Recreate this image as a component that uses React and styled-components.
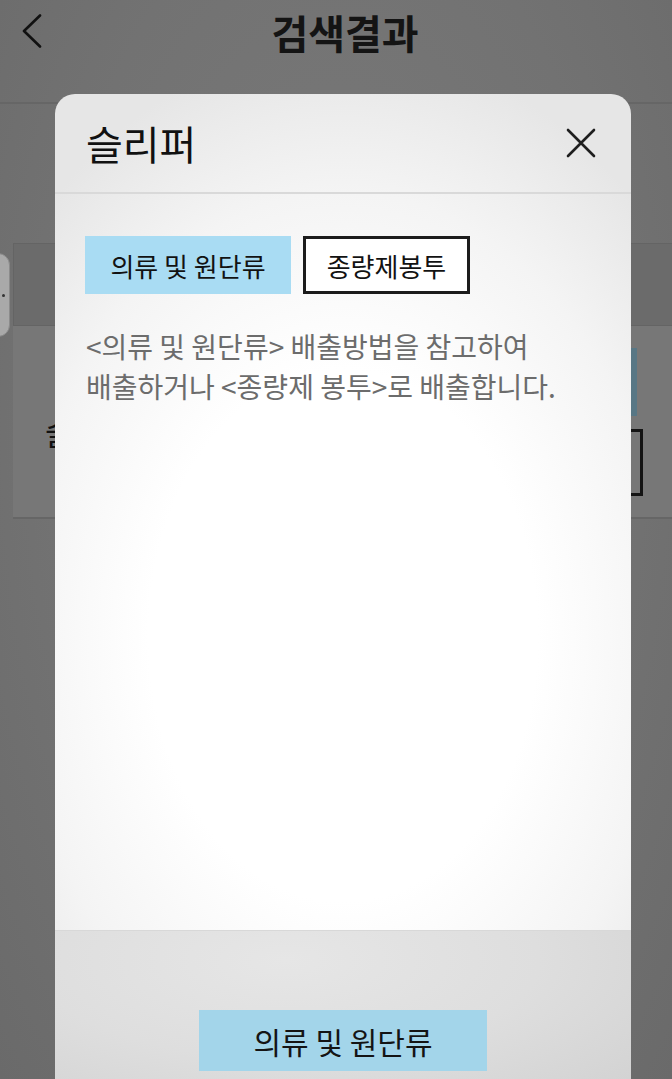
import React from "react";
import styled, { createGlobalStyle } from "styled-components";

const GlobalStyle = createGlobalStyle`
  html, body {
    margin: 0;
    padding: 0;
  }
  body {
    background: #717171;
    font-family: "Noto Sans CJK KR", "Noto Sans", sans-serif;
  }
`;

const Screen = styled.div`
  position: relative;
  width: 672px;
  height: 1079px;
  overflow: hidden;
  background: radial-gradient(ellipse at 50% 40%, #7a7a7a 0%, #727272 60%, #6a6a6a 100%);
`;

const TopBar = styled.header`
  height: 102px;
  display: grid;
  grid-template-columns: 82px 1fr 64px;
  align-items: start;
  border-bottom: 2px solid #666666;
`;

const BackButton = styled.button`
  border: 0;
  background: none;
  padding: 14px 0 0 22px;
  width: fit-content;
`;

const PageTitle = styled.h1`
  margin: 0;
  padding-top: 12px;
  text-align: center;
  font-size: 40px;
  line-height: 1;
  font-weight: 700;
  color: #141414;
`;

const SearchBar = styled.div`
  margin: 139px 0 0 13px;
  height: 81px;
  background: #6b6b6b;
  border: 1px solid #646464;
  border-right: 0;
`;

const ResultRow = styled.div`
  margin-left: 13px;
  height: 191px;
  display: flex;
  align-items: center;
  justify-content: space-between;
  border-bottom: 2px solid #666666;
  background: #777777;
`;

const ResultName = styled.span`
  padding-left: 32px;
  padding-top: 18px;
  font-size: 32px;
  color: #111;
`;

const RowActions = styled.div`
  display: flex;
  flex-direction: column;
  gap: 13px;
  margin-right: 29px;
`;

const RowButton = styled.div`
  width: 160px;
  height: ${(p) => (p.outline ? "61px" : "68px")};
  background: ${(p) => (p.outline ? "#777777" : "#587785")};
  border: ${(p) => (p.outline ? "3px solid #141414" : "0")};
`;

const SideHandle = styled.div`
  position: absolute;
  left: -14px;
  top: 253px;
  width: 24px;
  height: 84px;
  border-radius: 12px;
  background: #a9a9a9;
  border: 1px solid #8b8b8b;
  display: flex;
  align-items: center;
  justify-content: flex-end;
  padding-right: 4px;
  box-sizing: border-box;

  &::after {
    content: "";
    width: 3px;
    height: 3px;
    background: #333;
    border-radius: 50%;
  }
`;

const Modal = styled.section`
  position: absolute;
  left: 55px;
  top: 94px;
  width: 576px;
  bottom: 0;
  display: flex;
  flex-direction: column;
  border-radius: 20px 20px 0 0;
  overflow: hidden;
  background: radial-gradient(ellipse 75% 60% at 50% 55%, #ffffff 45%, #f4f4f4 75%, #e6e6e6 100%);
`;

const ModalHeader = styled.div`
  height: 98px;
  display: flex;
  align-items: center;
  justify-content: space-between;
  padding: 0 35px 0 31px;
  border-bottom: 2px solid #d9d9d9;
`;

const ModalTitle = styled.h2`
  margin: 0;
  font-size: 40px;
  line-height: 1;
  font-weight: 400;
  color: #111;
`;

const CloseButton = styled.button`
  border: 0;
  background: none;
  padding: 0;
  display: flex;
`;

const ModalBody = styled.div`
  flex: 1;
  padding: 42px 30px 0;
`;

const Tabs = styled.div`
  display: flex;
  gap: 12px;
`;

const Tab = styled.button`
  height: 58px;
  width: ${(p) => p.width}px;
  box-sizing: border-box;
  display: flex;
  align-items: center;
  justify-content: center;
  font-family: inherit;
  font-size: 26px;
  color: #121212;
  background: ${(p) => (p.active ? "#a9dcf3" : "#ffffff")};
  border: ${(p) => (p.active ? "0" : "3px solid #1c1c1c")};
  padding: 0;
`;

const Description = styled.p`
  margin: 32px 0 0;
  padding-left: 1px;
  font-size: 28px;
  line-height: 40px;
  color: #6c6c6c;
`;

const ModalFooter = styled.div`
  height: 149px;
  box-sizing: border-box;
  padding-top: 79px;
  display: flex;
  justify-content: center;
  align-items: flex-start;
  border-top: 1px solid #d8d8d8;
  background: radial-gradient(ellipse 80% 120% at 40% 20%, #e6e6e6 0%, #dedede 55%, #d3d3d3 100%);
`;

const MainButton = styled.button`
  width: 288px;
  height: 61px;
  border: 0;
  padding: 0;
  font-family: inherit;
  font-size: 30px;
  color: #141414;
  background: #a3d5ea;
`;

const tabs = [
  { label: "의류 및 원단류", width: 206 },
  { label: "종량제봉투", width: 167 },
];

export default function App() {
  const active = 0;

  return (
    <Screen>
      <GlobalStyle />
      <TopBar>
        <BackButton>
          <svg width="20" height="34" viewBox="0 0 20 34" fill="none">
            <polyline points="18,1.5 2,17 18,32.5" stroke="#111" strokeWidth="2.6" strokeLinecap="round" strokeLinejoin="round" />
          </svg>
        </BackButton>
        <PageTitle>검색결과</PageTitle>
        <span />
      </TopBar>
      <SearchBar />
      <ResultRow>
        <ResultName>슬리퍼</ResultName>
        <RowActions>
          <RowButton />
          <RowButton outline />
        </RowActions>
      </ResultRow>
      <SideHandle />

      <Modal>
        <ModalHeader>
          <ModalTitle>슬리퍼</ModalTitle>
          <CloseButton>
            <svg width="30" height="30" viewBox="0 0 30 30" fill="none">
              <path d="M2 2 L28 28 M28 2 L2 28" stroke="#1e1e1e" strokeWidth="2.6" strokeLinecap="round" />
            </svg>
          </CloseButton>
        </ModalHeader>
        <ModalBody>
          <Tabs>
            {tabs.map((t, i) => (
              <Tab key={t.label} width={t.width} active={i === active}>
                {t.label}
              </Tab>
            ))}
          </Tabs>
          <Description>
            &lt;의류 및 원단류&gt; 배출방법을 참고하여
            <br />
            배출하거나 &lt;종량제 봉투&gt;로 배출합니다.
          </Description>
        </ModalBody>
        <ModalFooter>
          <MainButton>{tabs[active].label}</MainButton>
        </ModalFooter>
      </Modal>
    </Screen>
  );
}
